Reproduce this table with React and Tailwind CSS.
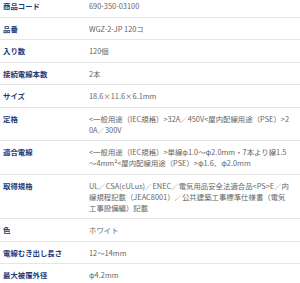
import React from "react";

const rows = [
  ["商品コード", "690-350-03100"],
  ["品番", "WGZ-2-JP 120コ"],
  ["入り数", "120個"],
  ["接続電線本数", "2本"],
  ["サイズ", "18.6×11.6×6.1mm"],
  ["定格", "<一般用途（IEC規格）>32A／450V<屋内配線用途（PSE）>20A／300V"],
  ["適合電線", "<一般用途（IEC規格）>単線φ1.0～φ2.0mm・7本より線1.5～4mm²<屋内配線用途（PSE）>φ1.6、φ2.0mm"],
  ["取得規格", "UL／CSA(cULus)／ENEC／電気用品安全法適合品<PS>E／内線規程記載（JEAC8001）／公共建築工事標準仕様書（電気工事設備編）記載"],
  ["色", "ホワイト"],
  ["電線むき出し長さ", "12～14mm"],
  ["最大被覆外径", "φ4.2mm"],
];

export default function App() {
  return (
    <div
      className="w-[300px] h-[283px] overflow-hidden bg-white"
      style={{ fontFamily: '"Noto Sans CJK JP", "Noto Sans", sans-serif' }}
    >
      <div className="-mt-[5px]">
        {rows.map(([k, v], i) => (
          <div
            key={i}
            className="flex border-b border-[#e6e6e6] py-[5.25px] text-[7.4px] leading-[11px]"
          >
            <div className="w-[89px] shrink-0 pl-[3px] font-bold text-[#1f3a78]">{k}</div>
            <div className="flex-1 pr-[9px] text-[#666666] break-all">{v}</div>
          </div>
        ))}
      </div>
    </div>
  );
}
